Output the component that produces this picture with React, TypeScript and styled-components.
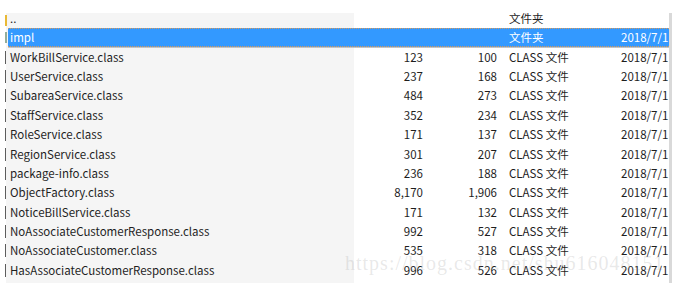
import React from 'react';
import styled, { createGlobalStyle } from 'styled-components';

const GlobalStyle = createGlobalStyle`
  html, body {
    margin: 0;
    padding: 0;
    background: #ffffff;
  }
  body {
    width: 675px;
    height: 292px;
    overflow: hidden;
    font-family: 'Noto Sans CJK SC', 'Noto Sans', sans-serif;
  }
`;

interface FileEntry {
	name: string;
	size?: string;
	packed?: string;
	kind: string;
	date?: string;
	marker: 'folder' | 'up' | 'file';
}

const files: FileEntry[] = [
	{ name: '..', kind: '文件夹', marker: 'up' },
	{ name: 'impl', kind: '文件夹', date: '2018/7/1', marker: 'folder' },
	{ name: 'WorkBillService.class', size: '123', packed: '100', kind: 'CLASS 文件', date: '2018/7/1', marker: 'file' },
	{ name: 'UserService.class', size: '237', packed: '168', kind: 'CLASS 文件', date: '2018/7/1', marker: 'file' },
	{ name: 'SubareaService.class', size: '484', packed: '273', kind: 'CLASS 文件', date: '2018/7/1', marker: 'file' },
	{ name: 'StaffService.class', size: '352', packed: '234', kind: 'CLASS 文件', date: '2018/7/1', marker: 'file' },
	{ name: 'RoleService.class', size: '171', packed: '137', kind: 'CLASS 文件', date: '2018/7/1', marker: 'file' },
	{ name: 'RegionService.class', size: '301', packed: '207', kind: 'CLASS 文件', date: '2018/7/1', marker: 'file' },
	{ name: 'package-info.class', size: '236', packed: '188', kind: 'CLASS 文件', date: '2018/7/1', marker: 'file' },
	{ name: 'ObjectFactory.class', size: '8,170', packed: '1,906', kind: 'CLASS 文件', date: '2018/7/1', marker: 'file' },
	{ name: 'NoticeBillService.class', size: '171', packed: '132', kind: 'CLASS 文件', date: '2018/7/1', marker: 'file' },
	{ name: 'NoAssociateCustomerResponse.class', size: '992', packed: '527', kind: 'CLASS 文件', date: '2018/7/1', marker: 'file' },
	{ name: 'NoAssociateCustomer.class', size: '535', packed: '318', kind: 'CLASS 文件', date: '2018/7/1', marker: 'file' },
	{ name: 'HasAssociateCustomerResponse.class', size: '996', packed: '526', kind: 'CLASS 文件', date: '2018/7/1', marker: 'file' },
];

const Page = styled.div`
	position: relative;
	padding-top: 13px;
	width: 675px;
	height: 292px;
	box-sizing: border-box;
`;

// sorted name column is tinted grey, the rest of the list stays white
const Panel = styled.div`
	width: 672px;
	box-sizing: border-box;
	padding-bottom: 3px;
	border-right: 3px solid #d9d9d9;
	background: linear-gradient(
		to right,
		#ffffff 6px,
		#f5f5f5 6px,
		#f5f5f5 354px,
		#ffffff 354px
	);
`;

const Row = styled.div<{ $short?: boolean }>`
	display: flex;
	align-items: ${({ $short }) => ($short ? 'flex-end' : 'stretch')};
	height: ${({ $short }) => ($short ? '15px' : '19.4px')};
`;

const markerColors = {
	up: '#e9b935',
	folder: '#93ad9a',
	file: '#5d5d5d',
};

const Marker = styled.span<{ $kind: FileEntry['marker'] }>`
	flex: none;
	width: ${({ $kind }) => ($kind === 'file' ? '1px' : '2px')};
	margin: 0 ${({ $kind }) => ($kind === 'file' ? '2px' : '1px')} 0 5px;
	align-self: center;
	height: ${({ $kind }) => ($kind === 'file' ? '13px' : '11px')};
	background: ${({ $kind }) => markerColors[$kind]};
`;

const Body = styled.div<{ $selected?: boolean }>`
	display: flex;
	align-items: center;
	flex: 1;
	min-width: 0;
	height: 19.4px;
	box-sizing: border-box;
	overflow: hidden;
	font-size: 11.5px;
	line-height: 17px;
	color: ${({ $selected }) => ($selected ? '#ffffff' : '#1e1e1e')};
	background: ${({ $selected }) => ($selected ? '#3399ff' : 'transparent')};
	border-top: 1px dotted ${({ $selected }) => ($selected ? '#d99a5a' : 'transparent')};
	border-bottom: 1px dotted ${({ $selected }) => ($selected ? '#d99a5a' : 'transparent')};
	box-shadow: ${({ $selected }) => ($selected ? '0 1px 0 #c4c4c4' : 'none')};
`;

const NameCell = styled.span`
	flex: none;
	width: 352px;
	padding-left: 2px;
	box-sizing: border-box;
	white-space: nowrap;
`;

const NumCell = styled.span<{ $w: number }>`
	flex: none;
	width: ${({ $w }) => $w}px;
	text-align: right;
	white-space: nowrap;
`;

const KindCell = styled.span`
	flex: none;
	width: 112px;
	margin-left: 12px;
	white-space: nowrap;
`;

const DateCell = styled.span`
	flex: none;
	white-space: nowrap;
`;

const Watermark = styled.div`
	position: absolute;
	left: 345px;
	top: 252px;
	font-family: 'Liberation Serif', serif;
	font-size: 20px;
	line-height: 22px;
	letter-spacing: 1px;
	color: rgba(140, 140, 140, 0.2);
	white-space: nowrap;
	pointer-events: none;
`;

export default function App() {
	return (
		<Page>
			<GlobalStyle />
			<Panel>
				{files.map((f, i) => (
					<Row key={f.name} $short={i === 0}>
						<Marker $kind={f.marker} />
						<Body $selected={f.name === 'impl'}>
							<NameCell>{f.name}</NameCell>
							<NumCell $w={63}>{f.size}</NumCell>
							<NumCell $w={74}>{f.packed}</NumCell>
							<KindCell>{f.kind}</KindCell>
							<DateCell>{f.date}</DateCell>
						</Body>
					</Row>
				))}
			</Panel>
			<Watermark>https://blog.csdn.net/shu616048151</Watermark>
		</Page>
	);
}
